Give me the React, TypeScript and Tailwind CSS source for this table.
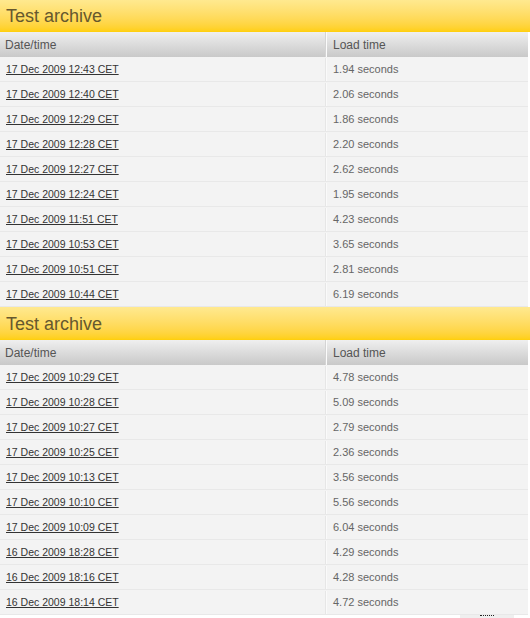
import React from 'react';

type Run = { date: string; load: string };

const firstRuns: Run[] = [
  { date: '17 Dec 2009 12:43 CET', load: '1.94 seconds' },
  { date: '17 Dec 2009 12:40 CET', load: '2.06 seconds' },
  { date: '17 Dec 2009 12:29 CET', load: '1.86 seconds' },
  { date: '17 Dec 2009 12:28 CET', load: '2.20 seconds' },
  { date: '17 Dec 2009 12:27 CET', load: '2.62 seconds' },
  { date: '17 Dec 2009 12:24 CET', load: '1.95 seconds' },
  { date: '17 Dec 2009 11:51 CET', load: '4.23 seconds' },
  { date: '17 Dec 2009 10:53 CET', load: '3.65 seconds' },
  { date: '17 Dec 2009 10:51 CET', load: '2.81 seconds' },
  { date: '17 Dec 2009 10:44 CET', load: '6.19 seconds' },
];

const secondRuns: Run[] = [
  { date: '17 Dec 2009 10:29 CET', load: '4.78 seconds' },
  { date: '17 Dec 2009 10:28 CET', load: '5.09 seconds' },
  { date: '17 Dec 2009 10:27 CET', load: '2.79 seconds' },
  { date: '17 Dec 2009 10:25 CET', load: '2.36 seconds' },
  { date: '17 Dec 2009 10:13 CET', load: '3.56 seconds' },
  { date: '17 Dec 2009 10:10 CET', load: '5.56 seconds' },
  { date: '17 Dec 2009 10:09 CET', load: '6.04 seconds' },
  { date: '16 Dec 2009 18:28 CET', load: '4.29 seconds' },
  { date: '16 Dec 2009 18:16 CET', load: '4.28 seconds' },
  { date: '16 Dec 2009 18:14 CET', load: '4.72 seconds' },
];

const Archive: React.FC<{ runs: Run[]; first?: boolean }> = ({ runs, first }) => (
  <section>
    {/* yellow title bar */}
    <div
      className={`flex items-center px-[6px] bg-gradient-to-b from-[#ffe98f] to-[#ffcf06] ${first ? 'h-[32px]' : 'h-[33px]'}`}
    >
      <h2 className="text-[18px] leading-none text-[#66582e]">Test archive</h2>
    </div>

    <div className="w-[528px]">
      {/* column headers */}
      <div className="flex h-[25px] bg-gradient-to-b from-[#efefef] to-[#c9c9c9] text-[12px] text-[#555]">
        <div className="w-[326px] flex items-center pl-[5px] border-r border-[#d4d4d4]">Date/time</div>
        <div className="flex-1 flex items-center pl-[6px] border-l border-[#fbfbfb]">Load time</div>
      </div>

      {runs.map((r) => (
        <div key={r.date} className="flex h-[25px] pt-[1px] bg-[#f3f3f3] border-b border-[#e8e8e8] text-[11px]">
          <div className="w-[326px] flex items-center pl-[6px] border-r border-[#e6e6e6]">
            <a href="#" className="underline text-[10.5px] text-[#333]">{r.date}</a>
          </div>
          <div className="flex-1 flex items-center pl-[6px] border-l border-[#fafafa] text-[#666]">{r.load}</div>
        </div>
      ))}
    </div>
  </section>
);

const App: React.FC = () => {
  return (
    <div className="w-[530px] min-h-[618px] bg-white font-['Liberation_Sans',Arial,sans-serif]">
      <Archive runs={firstRuns} first />
      <Archive runs={secondRuns} />
      <div className="flex justify-end pr-[16px]">
        <div className="w-[54px] h-[3px] bg-[#efefef] flex justify-center">
          <div className="w-[14px] border-t border-dotted border-[#222]" />
        </div>
      </div>
    </div>
  );
};

export default App;
